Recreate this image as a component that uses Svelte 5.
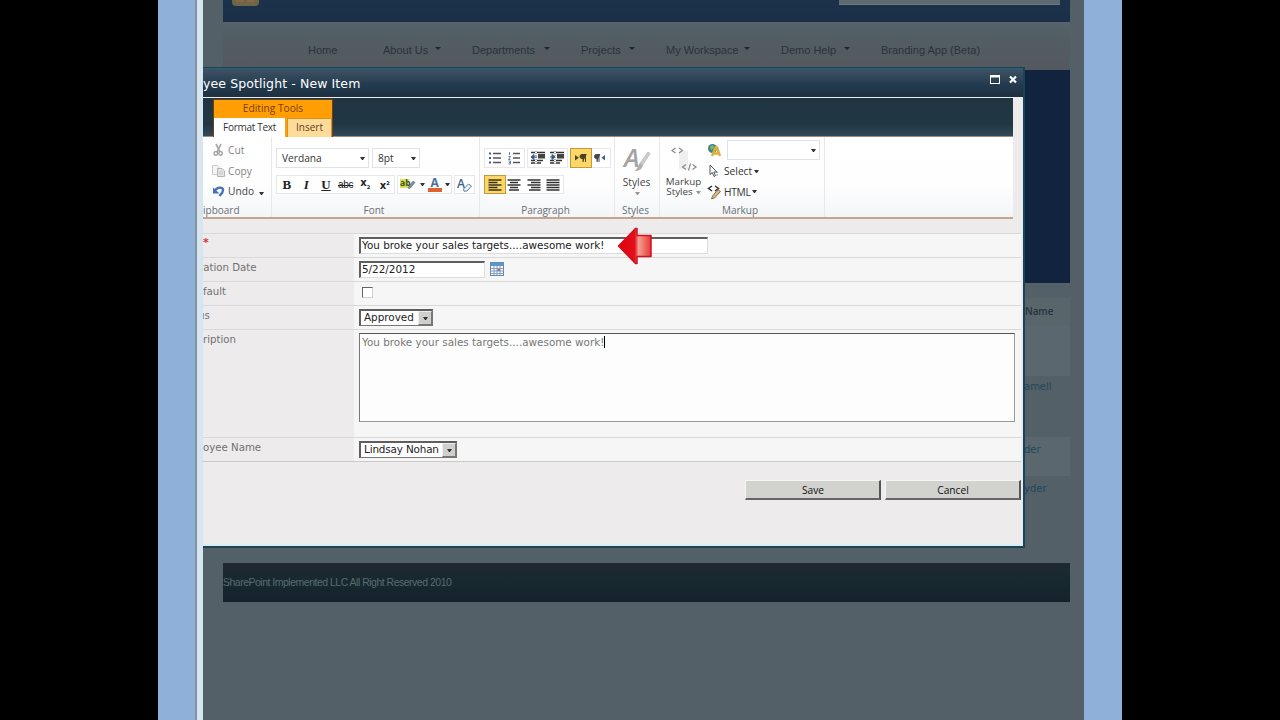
<!-- App.svelte -->
<script>
    const navItems = [
        { name: 'Home', menu: false },
        { name: 'About Us', menu: true },
        { name: 'Departments', menu: true },
        { name: 'Projects', menu: true },
        { name: 'My Workspace', menu: true },
        { name: 'Demo Help', menu: true },
        { name: 'Branding App (Beta)', menu: false },
    ];

    const people = [
        { name: 'amell', kind: 'one' },
        { name: 'der', kind: 'two' },
        { name: 'yder', kind: 'three' },
    ];

    let message = 'You broke your sales targets....awesome work!';
    let date = '5/22/2012';
    let status = 'Approved';
    let employee = 'Lindsay Nohan';
</script>

<div class="screen">
    <div class="frame">
        <div class="edge"></div>
        <div class="page">
            <div class="site">
                <div class="banner">
                    <div class="logo"><i></i><i></i></div>
                    <div class="search"></div>
                </div>
                <div class="nav">
                    {#each navItems as item}
                        <div class="nav-item">
                            <span>{item.name}</span>
                            {#if item.menu}<i class="tri"></i>{/if}
                        </div>
                    {/each}
                </div>
                <div class="hero"></div>
                <div class="list">
                    <div class="list-head">Name</div>
                    <div class="list-band"></div>
                    {#each people as person}
                        <div class="person {person.kind}">{person.name}</div>
                    {/each}
                </div>
                <div class="footer"><span>SharePoint Implemented LLC All Right Reserved 2010</span></div>
            </div>

            <div class="dialog">
                <div class="title-bar">
                    <span class="title">yee Spotlight - New Item</span>
                    <svg class="win" width="30" height="12" viewBox="0 0 30 12">
                        <rect x="0.5" y="1.5" width="9" height="8" fill="#2b3f4e" stroke="#fff" />
                        <path d="M0 2.5h10" stroke="#fff" stroke-width="2" />
                        <path d="M20 2.500l6 6M26 2.500l-6 6" stroke="#fff" stroke-width="2.200" />
                    </svg>
                </div>

                <div class="tab-bar">
                    <div class="tools">
                        <div class="tools-head"><span>Editing Tools</span></div>
                        <div class="tabs">
                            <div class="tab active"><span>Format Text</span></div>
                            <div class="tab"><span>Insert</span></div>
                        </div>
                    </div>
                </div>

                <div class="ribbon">
                    <div class="group clipboard">
                        <div class="clip-rows">
                            <div class="clip-row muted">
                                <svg width="13" height="14" viewBox="0 0 13 14">
                                    <path d="M4 1l4 8M9 1L5 9" stroke="#aaa" stroke-width="1.700" fill="none" />
                                    <circle cx="3.800" cy="10.500" r="1.800" fill="none" stroke="#999" stroke-width="1.300" />
                                    <circle cx="8.600" cy="10.500" r="1.800" fill="none" stroke="#999" stroke-width="1.300" />
                                </svg>
                                <span>Cut</span>
                            </div>
                            <div class="clip-row muted">
                                <svg width="13" height="14" viewBox="0 0 13 14">
                                    <path d="M.5 1.500h5l2 2v7h-7z" fill="#f4f4f4" stroke="#ccc" />
                                    <path d="M5.500 4.500h4.500l2.500 2.500v5.500h-7z" fill="#e6e6e6" stroke="#b3b3b3" />
                                    <path d="M7 8h4M7 10h4" stroke="#c3c3c3" />
                                </svg>
                                <span>Copy</span>
                            </div>
                            <div class="clip-row">
                                <svg width="13" height="14" viewBox="0 0 13 14">
                                    <path d="M3 6.500c2-3.500 8-4 8-.5 0 2.500-1.500 3.500-3.500 6" stroke="#4472b8" stroke-width="2.400" fill="none" />
                                    <path d="M1 3.500v6h6.500z" fill="#4472b8" />
                                </svg>
                                <span>Undo</span>
                                <i class="arrow undo-arrow"></i>
                            </div>
                        </div>
                        <div class="group-name left">ipboard</div>
                    </div>

                    <div class="group font">
                        <div class="line">
                            <div class="combo family"><span>Verdana</span><i class="arrow"></i></div>
                            <div class="combo size"><span>8pt</span><i class="arrow"></i></div>
                        </div>
                        <div class="line second">
                            <div class="set styles-set">
                                <b>B</b><em>I</em><u>U</u><s>abc</s>
                                <span class="x">x<sub>2</sub></span><span class="x">x<sup>2</sup></span>
                            </div>
                            <div class="set color-set">
                                <svg width="17" height="15" viewBox="0 0 17 15">
                                    <rect x="0" y="2" width="9" height="9" fill="#d3e05a" />
                                    <text x="0" y="9" font-size="8.500" font-weight="bold" fill="#464d1c">ab</text>
                                    <path d="M8 11l5-7 2 1.500-5 6z" fill="#7791a7" stroke="#526b80" stroke-width=".6" />
                                </svg>
                                <i class="arrow"></i>
                                <svg width="14" height="15" viewBox="0 0 14 15">
                                    <text x="2.500" y="10" font-size="12" font-weight="bold" fill="#4b6f9b">A</text>
                                    <rect x="0" y="11" width="14" height="4" fill="#e0622c" />
                                </svg>
                                <i class="arrow"></i>
                            </div>
                            <div class="set clear-set">
                                <svg width="16" height="15" viewBox="0 0 16 15">
                                    <text x="0" y="10.500" font-size="12" font-weight="600" fill="#3f6286">A</text>
                                    <path d="M6.500 12l5-5 3 2-4.500 5-3 .2z" fill="#eef3f9" stroke="#587fa8" />
                                </svg>
                            </div>
                        </div>
                        <div class="group-name">Font</div>
                    </div>

                    <div class="group paragraph">
                        <div class="line">
                            <div class="set pair">
                                <svg width="14" height="14" viewBox="0 0 14 14">
                                    <path d="M5 2.500h8M5 7h8M5 11.500h8" stroke="#555" stroke-width="1.300" />
                                    <path d="M1 2.500h2M1 7h2M1 11.500h2" stroke="#3c5f8f" stroke-width="2" />
                                </svg>
                                <svg width="14" height="14" viewBox="0 0 14 14">
                                    <path d="M6 2.500h7M6 7h7M6 11.500h7" stroke="#555" stroke-width="1.300" />
                                    <path d="M2.500 1v3M1.500 5.500h2l-2 3h2M1.500 10h2v3h-2M2 11.500h1" stroke="#6180a6" fill="none" />
                                </svg>
                            </div>
                            <div class="set pair">
                                <svg width="14" height="14" viewBox="0 0 14 14">
                                    <path d="M0 1.500h4M6 1.500h8M6 9.500h6M0 9.500h4M6 12h4M0 12h4" stroke="#333" stroke-width="1.300" />
                                    <path d="M7 3h7v4.500h-7z" fill="#444" />
                                    <path d="M0 6l3-2.500v5zM2 6h4" fill="#315d94" stroke="#315d94" />
                                    <path d="M5 0v14" stroke="#666" stroke-dasharray="1 1" />
                                </svg>
                                <svg width="14" height="14" viewBox="0 0 14 14">
                                    <path d="M0 1.500h4M6 1.500h8M6 9.500h6M0 9.500h4M6 12h4M0 12h4" stroke="#333" stroke-width="1.300" />
                                    <path d="M7 3h7v4.500h-7z" fill="#444" />
                                    <path d="M5 6L2 3.500v5zM0 6h3" fill="#315d94" stroke="#315d94" />
                                    <path d="M5 0v14" stroke="#666" stroke-dasharray="1 1" />
                                </svg>
                            </div>
                            <div class="set pair">
                                <div class="tool on">
                                    <svg width="14" height="14" viewBox="0 0 14 14">
                                        <path d="M1 4l4 2.800L1 9.500z" fill="#4b4a33" />
                                        <path d="M12.500 3.500H8a2 2 0 0 0 0 4h1V11M11.500 3.500V11" fill="#4b4120" stroke="#4b4120" />
                                    </svg>
                                </div>
                                <div class="tool">
                                    <svg width="14" height="14" viewBox="0 0 14 14">
                                        <path d="M7 3.500H3.500a2 2 0 0 0 0 4H4V11M6 3.500V11" fill="#444" stroke="#444" />
                                        <path d="M12 4L8.500 6.800l3.500 2.700z" fill="#3c5f8f" />
                                    </svg>
                                </div>
                            </div>
                        </div>
                        <div class="line second">
                            <div class="set align-set">
                                <div class="tool on">
                                    <svg width="14" height="12" viewBox="0 0 14 12"><path d="M.5 1h13M.5 3.500h9M.5 6h13M.5 8.500h9M.5 11h13" stroke="#3a3423" stroke-width="1.400" /></svg>
                                </div>
                                <div class="tool">
                                    <svg width="14" height="12" viewBox="0 0 14 12"><path d="M.5 1h13M3 3.500h8M.5 6h13M3 8.500h8M2 11h10" stroke="#333" stroke-width="1.400" /></svg>
                                </div>
                                <div class="tool">
                                    <svg width="14" height="12" viewBox="0 0 14 12"><path d="M.5 1h13M4 3.500h9.500M.5 6h13M4 8.500h9.500M2 11h11.500" stroke="#333" stroke-width="1.400" /></svg>
                                </div>
                                <div class="tool">
                                    <svg width="14" height="12" viewBox="0 0 14 12"><path d="M.5 1h13M.5 3.500h13M.5 6h13M.5 8.500h13M.5 11h13" stroke="#333" stroke-width="1.400" /></svg>
                                </div>
                            </div>
                        </div>
                        <div class="group-name">Paragraph</div>
                    </div>

                    <div class="group styles">
                        <svg class="big" width="28" height="30" viewBox="0 0 28 30">
                            <text x="1" y="22" font-size="26" font-weight="600" font-style="italic" fill="#a3a3a3">A</text>
                            <path d="M25 7l2 1.500-7 11-3-1z" fill="#cfcfcf" stroke="#b3b3b3" stroke-width=".8" />
                            <path d="M17 18.500l3 1.500c-1 4.500-4 6-9 6 4-1.500 3-5.500 6-7.500z" fill="#b0b0b0" />
                        </svg>
                        <span class="big-text">Styles</span>
                        <i class="arrow pale"></i>
                        <div class="group-name">Styles</div>
                    </div>

                    <div class="group markup">
                        <div class="markup-cols">
                            <div class="markup-big">
                                <svg width="28" height="30" viewBox="0 0 28 30">
                                    <path d="M9 6h9v18H9z" fill="#efefef" />
                                    <path d="M5.500 3L2 5.500 5.500 8M9 3l3.500 2.500L9 8" fill="none" stroke="#888" stroke-width="1.200" />
                                    <path d="M16 19.500l-3.500 2.500 3.500 2.500M20.500 18.500l-2 7M22.500 19.500L26 22l-3.500 2.500" fill="none" stroke="#888" stroke-width="1.200" />
                                </svg>
                                <span>Markup</span>
                                <span class="with-arrow">Styles<i class="arrow pale"></i></span>
                            </div>
                            <div class="markup-rows">
                                <div class="markup-row">
                                    <svg width="15" height="14" viewBox="0 0 15 14">
                                        <circle cx="5.500" cy="5.500" r="4.500" fill="#3b8591" />
                                        <path d="M3 3.500l3-1.500 1 3-3 2z" fill="#87b866" />
                                        <path d="M5 13L8.500 4.500h1.500L13 13M6.500 10.500h5" fill="none" stroke="#dcae3c" stroke-width="2.400" />
                                    </svg>
                                    <div class="combo lang"><i class="arrow"></i></div>
                                </div>
                                <div class="markup-row">
                                    <svg width="15" height="14" viewBox="0 0 15 14">
                                        <path d="M3 1v9.500l2.300-2 1.700 4 1.500-.8-1.700-3.700H10z" fill="#fff" stroke="#555" />
                                        <path d="M9 8.500h2M9 11h2" stroke="#7a99bf" />
                                    </svg>
                                    <span>Select</span><i class="arrow"></i>
                                </div>
                                <div class="markup-row">
                                    <svg width="15" height="14" viewBox="0 0 15 14">
                                        <path d="M5 1L1.500 3.500 5 6M8 1l3.500 2.500L8 6" fill="none" stroke="#333" stroke-width="1.500" />
                                        <path d="M11 4.500l2.500 2-6 6.500-3 .8 1-2.800z" fill="#dcb886" stroke="#6d5336" stroke-width=".8" />
                                    </svg>
                                    <span class="html">HTML</span><i class="arrow"></i>
                                </div>
                            </div>
                        </div>
                        <div class="group-name">Markup</div>
                    </div>
                </div>

                <div class="form">
                    <div class="row">
                        <div class="label"><span class="star">*</span></div>
                        <div class="value">
                            <div class="input wide">{message}</div>
                            <svg class="pointer" width="36" height="38" viewBox="0 0 36 38">
                                <defs>
                                    <linearGradient id="red" x1="0" x2="1">
                                        <stop offset="0" stop-color="#e00010" />
                                        <stop offset=".5" stop-color="#e2101c" />
                                        <stop offset=".62" stop-color="#f3a090" />
                                        <stop offset="1" stop-color="#e8373a" />
                                    </linearGradient>
                                </defs>
                                <path d="M1.500 19L18.500 1.500h1.500v7h14v21H20v7h-1.500z" fill="url(#red)" stroke="#d0101c" stroke-width="1.500" stroke-linejoin="round" />
                            </svg>
                        </div>
                    </div>
                    <div class="row">
                        <div class="label"><span class="l-date">ration Date</span></div>
                        <div class="value">
                            <div class="input date">{date}</div>
                            <svg class="calendar" width="15" height="14" viewBox="0 0 15 14">
                                <rect x=".5" y=".5" width="13" height="13" fill="#f2f6fb" stroke="#6a8aa8" />
                                <rect x="1" y="1" width="12" height="3" fill="#5b96cf" />
                                <path d="M1 6.500h12M1 9h12M1 11.500h12M4 4v9M7 4v9M10 4v9" stroke="#6f93b8" stroke-width=".8" />
                                <rect x="7.500" y="7" width="2.500" height="2" fill="#b5655c" />
                            </svg>
                        </div>
                    </div>
                    <div class="row">
                        <div class="label"><span>fault</span></div>
                        <div class="value"><div class="check"></div></div>
                    </div>
                    <div class="row">
                        <div class="label"><span class="l-us">us</span></div>
                        <div class="value">
                            <div class="select approved"><span>{status}</span><div class="drop"><i class="arrow"></i></div></div>
                        </div>
                    </div>
                    <div class="row tall">
                        <div class="label"><span>ription</span></div>
                        <div class="value">
                            <div class="area"><span>{message}</span><i class="caret"></i></div>
                        </div>
                    </div>
                    <div class="row last">
                        <div class="label"><span>oyee Name</span></div>
                        <div class="value">
                            <div class="select person-select"><span>{employee}</span><div class="drop"><i class="arrow"></i></div></div>
                        </div>
                    </div>
                </div>

                <div class="buttons">
                    <div class="button">Save</div>
                    <div class="button">Cancel</div>
                </div>
            </div>
        </div>
    </div>
</div>

<style>
    :global(body) {
        background: #000;
        overflow: hidden;
    }
    .screen {
        width: 1280px;
        height: 720px;
        display: flex;
        justify-content: center;
        background: #000;
        overflow: hidden;
        font-family: "Liberation Sans", Arial, sans-serif;
        font-size: 11px;
    }
    .screen * {
        box-sizing: border-box;
    }
    svg {
        display: block;
        flex: none;
        overflow: visible;
    }
    i, em {
        font-style: normal;
    }
    span, .group-name, .button, .input {
        white-space: nowrap;
    }
    .frame {
        width: 964px;
        height: 720px;
        display: flex;
        padding-left: 37px;
        padding-right: 38px;
        background: #8fb0d9;
    }
    .edge {
        width: 8px;
        border-left: 2px solid #8493a0;
        background: #d6e5ef;
    }
    .page {
        position: relative;
        width: 881px;
        height: 720px;
        overflow: hidden;
        background: #536067;
    }
    .site {
        width: 847px;
        margin-left: 20px;
    }
    .banner {
        display: flex;
        justify-content: space-between;
        align-items: flex-start;
        height: 22px;
        padding: 0 10px 0 9px;
        background: linear-gradient(#1c324b, #1a2f47);
    }
    .logo {
        display: flex;
        justify-content: center;
        gap: 3px;
        width: 27px;
        height: 6px;
        border-radius: 0 0 4px 4px;
        background: #6d6744;
    }
    .logo i {
        width: 8px;
        height: 2px;
        background: #8a654d;
    }
    .search {
        width: 221px;
        height: 5px;
        background: #5d6a70;
        border-bottom: 1px solid #6c7980;
    }
    .nav {
        display: grid;
        grid-template-columns: 75px 89px 109px 85px 115px 100px 140px;
        height: 48px;
        padding: 20px 0 0 85px;
        color: #27343d;
        background: linear-gradient(#56636a, #525d64 30%, #54595e);
        font-size: 11px;
    }
    .nav-item {
        display: flex;
        justify-content: space-between;
        height: 14px;
        line-height: 16px;
        padding-right: 31px;
    }
    .tri {
        margin-top: 5px;
        width: 6px;
        border: 3px solid transparent;
        border-top-color: #1c262d;
        border-bottom: 0;
        height: 3px;
    }
    .hero {
        height: 213px;
        background: #12233f;
    }
    .list {
        height: 280px;
        padding-top: 15px;
        font-family: "DejaVu Sans", sans-serif;
        font-size: 10px;
        color: #21475d;
    }
    .list-head {
        height: 27px;
        line-height: 27px;
        padding-left: 802px;
        font-weight: 600;
        font-size: 9.8px;
        font-family: "Open Sans", sans-serif;
        color: #25343f;
        background: #58656b;
    }
    .list-band {
        height: 51px;
        background: #5a676e;
    }
    .person {
        padding-left: 801px;
    }
    .one {
        height: 61px;
        line-height: 21px;
    }
    .two {
        height: 39px;
        line-height: 25px;
        background: #5a676e;
    }
    .three {
        line-height: 25px;
    }
    .footer {
        height: 39px;
        line-height: 39px;
        color: #5a6a72;
        background: linear-gradient(#202830, #17292f 50%, #16212c);
        font-size: 10.5px;
        letter-spacing: -0.5px;
    }
    .dialog {
        position: absolute;
        top: 67px;
        left: 0;
        width: 822px;
        height: 481px;
        background: #edebec;
        border: 2px solid #1d4353;
        border-left: 0;
        border-top-width: 1px;
        box-shadow: inset -1px -2px 0 #d8eef4;
        font-family: "Open Sans", "Noto Sans", sans-serif;
        color: #444;
    }
    .title-bar {
        display: flex;
        justify-content: space-between;
        align-items: flex-start;
        height: 30px;
        padding: 5px 3px 0 0;
        border-top: 1px solid #23627b;
        border-bottom: 1px solid #e6eff4;
        color: #fff;
        background: linear-gradient(#3e5264, #223a4e 60%, #1f3040);
    }
    .title {
        font-family: "DejaVu Sans", sans-serif;
        font-size: 12.5px;
        line-height: 19px;
        letter-spacing: 0.1px;
    }
    .tab-bar {
        width: 810px;
        height: 39px;
        padding: 1px 0 0 10px;
        background: linear-gradient(#203541, #213744 70%, #30485a);
        border-bottom: 1px solid #a08a78;
    }
    .tools {
        width: 120px;
        height: 38px;
        background: #ff9f05;
        border: 1px solid #6c4218;
        border-bottom: 0;
    }
    .tools-head {
        height: 18px;
        line-height: 16px;
        text-align: center;
        color: #7e3c09;
        font-size: 10.2px;
    }
    .tabs {
        display: flex;
        gap: 2px;
        height: 20px;
    }
    .tab {
        width: 45px;
        height: 19px;
        line-height: 17px;
        text-align: center;
        font-size: 10px;
        color: #5a4324;
        background: #ffdb9a;
        border: 1px solid #d98f22;
        border-bottom: 0;
    }
    .tab.active {
        width: 71px;
        height: 20px;
        line-height: 19px;
        letter-spacing: -0.3px;
        color: #333;
        background: #fff;
        border: 0;
    }
    .ribbon {
        display: flex;
        width: 810px;
        height: 82px;
        background: linear-gradient(#fff, #fefefe 60%, #f3f5f7);
        border-bottom: 2px solid #c5a58e;
        font-size: 10.2px;
    }
    .group {
        display: flex;
        flex-direction: column;
        height: 80px;
        border-right: 1px solid #e6e9ec;
    }
    .group-name {
        margin-top: auto;
        height: 13px;
        line-height: 13px;
        text-align: center;
        color: #686f77;
        font-size: 10px;
    }
    .left {
        text-align: left;
    }
    .arrow {
        flex: none;
        width: 5px;
        height: 3px;
        border: 2.5px solid transparent;
        border-top: 3px solid #333;
        border-bottom: 0;
    }
    .pale {
        border-top-color: #999;
    }
    .clipboard {
        width: 69px;
    }
    .clip-rows {
        padding-top: 3px;
    }
    .clip-row {
        display: flex;
        align-items: center;
        height: 20.5px;
        padding-left: 9px;
        gap: 3px;
    }
    .muted {
        color: #858585;
    }
    .undo-arrow {
        margin: 5px 0 0 2px;
    }
    .font {
        width: 208px;
        padding: 11px 0 0 4px;
    }
    .font .group-name, .paragraph .group-name {
        margin-right: 7px;
    }
    .line {
        display: flex;
        gap: 3px;
        height: 20px;
    }
    .second {
        margin-top: 7px;
        height: 19px;
        gap: 2px;
    }
    .combo {
        display: flex;
        justify-content: space-between;
        align-items: center;
        height: 20px;
        padding: 0 3px 0 5px;
        border: 1px solid #dfe2e6;
        background: #fff;
        color: #333;
    }
    .family {
        width: 93px;
    }
    .size {
        width: 48px;
    }
    .set {
        display: flex;
        align-items: center;
        justify-content: space-around;
        border: 1px solid #e6e8eb;
        background: #fff;
    }
    .styles-set {
        display: grid;
        grid-template-columns: repeat(6, 19.6px);
        justify-items: center;
        width: 119px;
        padding-right: 2px;
        font-family: "Liberation Serif", serif;
        font-size: 13px;
        color: #222;
    }
    .styles-set b {
        font-weight: 900;
    }
    .styles-set em {
        font-style: italic;
        font-weight: bold;
    }
    .styles-set u {
        font-weight: bold;
    }
    .styles-set s {
        font-size: 10px;
        letter-spacing: -0.3px;
        font-family: "Liberation Sans", sans-serif;
    }
    .x {
        font-family: "DejaVu Sans", sans-serif;
        font-size: 10px;
        line-height: 12px;
        font-weight: bold;
    }
    .x sub, .x sup {
        font-size: 5px;
    }
    .color-set {
        width: 55px;
    }
    .clear-set {
        width: 21px;
    }
    .paragraph {
        width: 135px;
        padding: 11px 0 0 4px;
    }
    .paragraph .line {
        gap: 2px;
    }
    .pair {
        width: 41px;
    }
    .tool {
        display: flex;
        align-items: center;
        justify-content: center;
        width: 20px;
        height: 100%;
    }
    .on {
        background: #fcd766;
        outline: 1px solid #c09a3c;
    }
    .align-set {
        width: 80px;
    }
    .styles {
        width: 45px;
        align-items: center;
        padding: 8px 3px 0 0;
    }
    .big {
        margin-left: 3px;
    }
    .big-text {
        line-height: 14px;
        margin: 0 0 3px 2px;
    }
    .styles .arrow {
        margin-left: 3px;
    }
    .markup {
        width: 165px;
    }
    .markup .group-name {
        margin-right: 4px;
    }
    .markup-cols {
        display: flex;
    }
    .markup-big {
        display: flex;
        flex-direction: column;
        align-items: center;
        width: 47px;
        padding-top: 8px;
        font-size: 9.8px;
    }
    .markup-big span {
        line-height: 10px;
    }
    .markup-big svg + span {
        margin-top: 2px;
    }
    .with-arrow {
        display: flex;
        align-items: center;
        gap: 3px;
    }
    .markup-rows {
        padding-top: 3px;
    }
    .markup-row {
        display: flex;
        align-items: center;
        height: 20.8px;
        gap: 2px;
        color: #333;
    }
    .html {
        letter-spacing: -0.3px;
    }
    .lang {
        justify-content: flex-end;
        width: 93px;
        height: 20px;
        margin-left: 3px;
    }
    .form {
        padding-top: 14px;
        width: 818px;
        font-family: "DejaVu Sans", sans-serif;
        font-size: 10.4px;
        background: #edebec;
    }
    .row {
        display: flex;
        height: 24px;
        border-top: 1px solid #d9d9da;
    }
    .tall {
        height: 108px;
    }
    .last {
        height: 25px;
        border-bottom: 1px solid #c9c9ca;
    }
    .label {
        width: 151px;
        padding-top: 3px;
        line-height: 14px;
        color: #707070;
        font-size: 10.2px;
    }
    .label span {
        display: block;
    }
    .label .star {
        margin-top: -1px;
        color: #e03030;
        font-size: 11px;
        font-weight: bold;
    }
    .label .l-date {
        margin-left: -4px;
    }
    .label .l-us {
        margin-left: -5px;
    }
    .value {
        position: relative;
        display: flex;
        flex: 1;
        align-items: flex-start;
        padding: 3px 0 0 5px;
        background: #f6f6f6;
    }
    .input {
        height: 17px;
        line-height: 13px;
        padding-left: 1px;
        color: #222;
        background: #fff;
        border: 1px solid #ddd;
        border-top: 2px solid #5f5f5f;
        border-left: 2px solid #5f5f5f;
    }
    .wide {
        width: 349px;
    }
    .date {
        width: 126px;
        margin-right: 5px;
    }
    .calendar {
        margin-top: 1px;
    }
    .pointer {
        position: absolute;
        left: 263px;
        top: -7px;
        z-index: 2;
    }
    .check {
        width: 11px;
        height: 11px;
        margin: 2px 0 0 3px;
        background: #fff;
        border: 1px solid #d0d0d0;
        border-top-color: #666;
        border-left-color: #666;
    }
    .select {
        display: flex;
        justify-content: space-between;
        height: 17px;
        line-height: 13px;
        padding-left: 3px;
        color: #222;
        background: #fff;
        border: 1px solid #777;
        border-top: 2px solid #5f5f5f;
        border-left: 2px solid #5f5f5f;
    }
    .approved {
        width: 74px;
    }
    .person-select {
        width: 98px;
        letter-spacing: -0.15px;
    }
    .drop {
        display: flex;
        align-items: center;
        justify-content: center;
        width: 14px;
        background: #cfcfcb;
        border: 1px solid #eee;
        border-right-color: #777;
        border-bottom-color: #777;
    }
    .area {
        display: flex;
        width: 656px;
        height: 89px;
        padding: 1px 0 0 2px;
        line-height: 14px;
        color: #777;
        background: #fdfdfd;
        border: 1px solid #999;
        border-top-color: #555;
        border-left-color: #777;
    }
    .caret {
        width: 1px;
        height: 12px;
        margin-top: 1px;
        background: #000;
    }
    .buttons {
        display: flex;
        justify-content: flex-end;
        gap: 4px;
        padding: 18px 2px 0 0;
    }
    .button {
        width: 136px;
        height: 20px;
        line-height: 18px;
        padding-left: 1px;
        text-align: center;
        font-size: 10.2px;
        color: #111;
        background: #d2d2ce;
        border: 1px solid #f6f6f6;
        border-right: 2px solid #555;
        border-bottom: 2px solid #666;
    }
</style>
